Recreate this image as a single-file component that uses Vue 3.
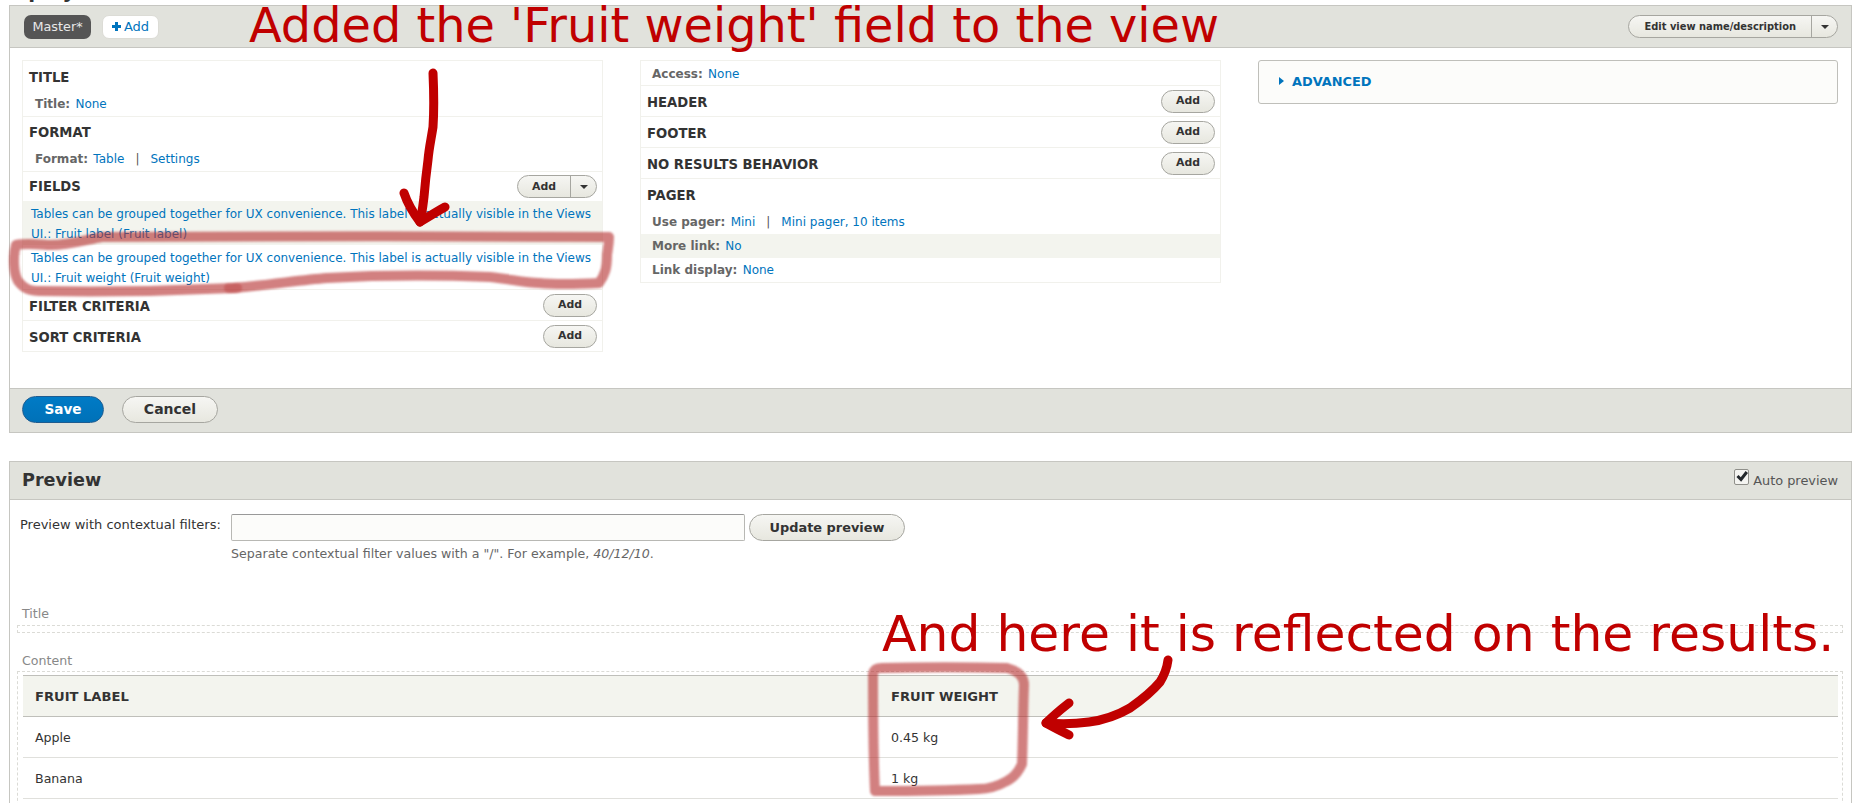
<template>
  <div class="page">
    <div class="cut-title">Displays</div>

    <section class="panel edit-panel">
      <header class="panel-head display-head">
        <div class="tabs">
          <span class="tab-master">Master*</span>
          <span class="tab-add">
            <svg class="plus" viewBox="0 0 9 9" width="9" height="9"><path d="M3 0h3v3h3v3H6v3H3V6H0V3h3z" fill="#0074bd" /></svg>Add
          </span>
        </div>
        <div class="drop-btn edit-drop">
          <span class="drop-main">Edit view name/description</span>
          <span class="drop-caret"></span>
        </div>
      </header>

      <div class="columns">
        <div class="bucket-col">
          <div class="bucket">
            <div class="bucket-title">TITLE</div>
            <div class="opt"><b>Title:</b> <a>None</a></div>
          </div>
          <div class="bucket">
            <div class="bucket-title second">FORMAT</div>
            <div class="opt"><b>Format:</b> <a>Table</a><i class="sep">|</i><a>Settings</a></div>
          </div>
          <div class="bucket">
            <div class="bucket-head fields-head">
              <span class="bucket-name">FIELDS</span>
              <div class="drop-btn">
                <span class="drop-main small">Add</span>
                <span class="drop-caret"></span>
              </div>
            </div>
            <div class="field-row odd"><a>Tables can be grouped together for UX convenience. This label is actually visible in the Views UI.: Fruit label (Fruit label)</a></div>
            <div class="field-row"><a>Tables can be grouped together for UX convenience. This label is actually visible in the Views UI.: Fruit weight (Fruit weight)</a></div>
          </div>
          <div class="bucket bucket-head" v-for="name in ['FILTER CRITERIA', 'SORT CRITERIA']" :key="name">
            <span class="bucket-name">{{ name }}</span>
            <span class="btn-add">Add</span>
          </div>
        </div>

        <div class="bucket-col">
          <div class="bucket">
            <div class="opt access"><b>Access:</b> <a>None</a></div>
          </div>
          <div class="bucket bucket-head" v-for="name in ['HEADER', 'FOOTER', 'NO RESULTS BEHAVIOR']" :key="name">
            <span class="bucket-name">{{ name }}</span>
            <span class="btn-add">Add</span>
          </div>
          <div class="bucket">
            <div class="bucket-title pager-title">PAGER</div>
            <div class="opt pager-opt"><b>Use pager:</b> <a>Mini</a><i class="sep">|</i><a>Mini pager, 10 items</a></div>
            <div class="opt pager-opt odd"><b>More link:</b> <a>No</a></div>
            <div class="opt pager-opt"><b>Link display:</b> <a>None</a></div>
          </div>
        </div>

        <div class="advanced">
          <span class="tri"></span>
          <a class="advanced-link">ADVANCED</a>
        </div>
      </div>

      <footer class="actions">
        <span class="btn btn-save">Save</span>
        <span class="btn btn-cancel">Cancel</span>
      </footer>
    </section>

    <section class="panel preview-panel">
      <header class="panel-head preview-head">
        <h2>Preview</h2>
        <label class="auto">
          <span class="check">
            <svg viewBox="0 0 16 16" width="16" height="16"><path d="M3.5 8 7 11.5 12.8 4" fill="none" stroke="#23282c" stroke-width="3" /></svg>
          </span>
          Auto preview
        </label>
      </header>

      <div class="filter-row">
        <span class="filter-label">Preview with contextual filters:</span>
        <div>
          <div class="filter-controls">
            <span class="text-input"></span>
            <span class="btn-update">Update preview</span>
          </div>
          <p class="hint">Separate contextual filter values with a "/". For example, <em>40/12/10</em>.</p>
        </div>
      </div>

      <div class="result-label title-label">Title</div>
      <div class="dashed title-box"></div>
      <div class="result-label content-label">Content</div>
      <div class="dashed content-box">
        <table>
          <thead>
            <tr><th class="first-col">FRUIT LABEL</th><th>FRUIT WEIGHT</th></tr>
          </thead>
          <tbody>
            <tr v-for="row in rows" :key="row.label">
              <td>{{ row.label }}</td><td>{{ row.weight }}</td>
            </tr>
          </tbody>
        </table>
      </div>
    </section>

    <!-- hand drawn notes on top of the screenshot -->
    <svg class="ink" width="1874" height="803" viewBox="0 0 1874 803">
      <g fill="none" stroke-linecap="round" stroke-linejoin="round">
        <g class="ink-soft" stroke="#b52d2d" stroke-width="10" opacity="0.6">
          <path d="M609 237C450 236 250 236 102 237C85 240 65 246 48 245C35 244 25 243 16 245C13 255 13 272 18 281C24 289 30 291 40 291C100 292 170 291 233 288C270 285 300 280 327 278C380 275 440 275 490 277C510 279 525 283 539 283C560 285 580 284 599 283C605 275 607 268 607 255C608 248 609 244 609 237" />
          <path d="M875 791C873 750 873 710 873 674C874 669 877 668 881 668C920 667 970 667 1007 668C1018 671 1024 676 1024 685C1023 710 1023 740 1022 764C1018 773 1013 778 1007 781C998 786 990 789 979 789C940 791 905 791 875 791" />
        </g>
        <path class="ink-soft" d="M229 288L237 288" stroke="#b52d2d" stroke-width="10" opacity="0.35" />
        <g class="ink-hard" stroke="#c00000" stroke-width="9">
          <path d="M433 73C434 95 434 112 433 127C431 140 429 148 428 160C426 175 425 185 424 197C423 205 422 214 420 222" />
          <path d="M404 193C408 205 414 214 420 222C428 217 436 212 445 207" />
          <path d="M1168 660C1167 668 1165 674 1160 682C1150 694 1140 701 1130 708C1118 715 1104 720 1089 722C1074 724 1060 724 1046 723" />
          <path d="M1069 703C1060 710 1052 717 1046 723C1053 727 1061 731 1069 735" />
        </g>
      </g>
    </svg>
    <div class="note note-top">Added the 'Fruit weight' field to the view</div>
    <div class="note note-bottom">And here it is reflected on the results.</div>
  </div>
</template>

<script setup>
const rows = [
  { label: "Apple", weight: "0.45 kg" },
  { label: "Banana", weight: "1 kg" },
];
</script>

<style>
html, body {
  margin: 0;
  background: #fff;
  overflow: hidden;
}
</style>

<style scoped>
.page {
  position: relative;
  width: 1874px;
  height: 803px;
  overflow: hidden;
  font-family: "DejaVu Sans", sans-serif;
  font-size: 12px;
  color: #333;
  box-sizing: border-box;
  padding: 5px 22px 0 9px;
  background: #fff;
}
a { color: #0074bd; }
b { font-weight: 700; color: #666; }
.cut-title {
  position: absolute;
  left: -7px;
  top: -21px;
  font-size: 20px;
  line-height: 24px;
  font-weight: 700;
  color: #333;
}
.panel {
  border: 1px solid #c6c6c1;
  box-sizing: border-box;
}
.panel-head {
  display: flex;
  align-items: center;
  justify-content: space-between;
  background: #e1e2dc;
  border-bottom: 1px solid #c6c6c1;
  box-sizing: border-box;
}
.display-head {
  height: 42px;
  padding: 0 13px 0 14px;
}
.tabs {
  display: flex;
  gap: 11px;
}
.tab-master {
  width: 67px;
  height: 24px;
  line-height: 24px;
  text-align: center;
  border-radius: 7px;
  background: #555;
  color: #e8e8e8;
  font-size: 12.8px;
}
.tab-add {
  display: flex;
  align-items: center;
  justify-content: center;
  gap: 3px;
  width: 57px;
  height: 24px;
  box-sizing: border-box;
  border-radius: 7px;
  border: 1px solid #dcdcd6;
  background: #fff;
  color: #0074bd;
  font-size: 13px;
}
.drop-btn {
  display: flex;
  height: 23px;
  border: 1px solid #a6a6a0;
  border-radius: 12px;
  box-sizing: border-box;
  background: linear-gradient(#f6f6f3, #e7e7df);
  overflow: hidden;
}
.drop-main {
  display: flex;
  align-items: center;
  padding: 0 14px;
  font-size: 10.9px;
  font-weight: 700;
  border-right: 1px solid #a6a6a0;
  color: #333;
}
.drop-caret {
  position: relative;
  width: 25px;
}
.drop-caret::after {
  content: "";
  position: absolute;
  left: 9px;
  top: 9px;
  border: 4px solid transparent;
  border-top: 4px solid #333;
  border-bottom: 0;
}
.edit-drop .drop-main {
  padding: 0 15px 0 16px;
  font-size: 9.9px;
}
.columns {
  display: grid;
  grid-template-columns: 581px 581px 580px;
  column-gap: 37px;
  align-items: start;
  height: 340px;
  padding: 12px 14px 0 12px;
  box-sizing: border-box;
}
.bucket-col {
  border: 1px solid #f1f1ec;
  box-sizing: border-box;
}
.bucket + .bucket {
  border-top: 1px solid #f1f1ec;
}
.bucket-title {
  font-size: 13.2px;
  font-weight: 700;
  color: #333;
  padding: 9px 6px 0;
  height: 30px;
  box-sizing: border-box;
}
.bucket-title.second {
  height: 29px;
  padding-top: 8px;
}
.bucket-name {
  font-size: 13.2px;
  font-weight: 700;
  color: #333;
  margin-top: 2px;
}
.bucket-head {
  display: flex;
  align-items: center;
  justify-content: space-between;
  height: 31px;
  padding: 0 5px 0 6px;
  box-sizing: border-box;
}
.fields-head {
  height: 29px;
}
.fields-head .bucket-name {
  margin-top: 0;
}
.opt {
  height: 25px;
  line-height: 26px;
  padding-left: 12px;
  box-sizing: border-box;
  color: #666;
}
.opt b { margin-right: 1.5px; }
.access {
  height: 24px;
  line-height: 26px;
  padding-left: 11px;
}
.pager-opt {
  height: 24px;
  line-height: 25px;
  padding-left: 11px;
}
.pager-title {
  height: 31px;
}
.odd {
  background: #f3f4ee;
}
.sep {
  font-style: normal;
  margin: 0 11px;
  color: #555;
}
.field-row {
  height: 44px;
  padding: 3px 7px 0 8px;
  line-height: 20px;
  box-sizing: border-box;
}
.btn-add {
  width: 54px;
  height: 23px;
  line-height: 20px;
  text-align: center;
  box-sizing: border-box;
  border: 1px solid #a6a6a0;
  border-radius: 12px;
  background: linear-gradient(#f6f6f3, #e7e7df);
  font-size: 10.9px;
  font-weight: 700;
  color: #333;
}
.advanced {
  display: flex;
  align-items: center;
  height: 44px;
  padding: 0 0 2px 20px;
  box-sizing: border-box;
  background: #fcfcfa;
  border: 1px solid #bfbfba;
  border-radius: 3px;
}
.tri {
  border: 4px solid transparent;
  border-left: 5px solid #0074bd;
  border-right: 0;
  margin-right: 8px;
}
.advanced-link {
  font-size: 12.9px;
  font-weight: 700;
}
.actions {
  display: flex;
  align-items: center;
  gap: 18px;
  height: 44px;
  padding: 0 0 2px 12px;
  background: #e1e2dc;
  border-top: 1px solid #c6c6c1;
  box-sizing: border-box;
}
.btn {
  height: 27px;
  line-height: 25px;
  text-align: center;
  box-sizing: border-box;
  border-radius: 14px;
  font-weight: 700;
}
.btn-save {
  width: 82px;
  font-size: 13.6px;
  color: #fff;
  background: linear-gradient(#007bc6, #0071b8);
  border: 1px solid #1e5c90;
}
.btn-cancel {
  width: 96px;
  font-size: 14px;
  color: #333;
  background: linear-gradient(#f6f6f3, #e7e7df);
  border: 1px solid #a6a6a0;
}
.preview-panel {
  margin-top: 28px;
  height: 360px;
}
.preview-head {
  height: 38px;
  padding: 0 13px 1px 12px;
}
h2 {
  margin: 0;
  font-size: 17.6px;
  font-weight: 700;
  color: #333;
}
.auto {
  display: flex;
  align-items: center;
  gap: 4px;
  color: #555;
  font-size: 12.9px;
}
.check {
  width: 15px;
  height: 16px;
  border: 1px solid #8f8f8a;
  border-radius: 2px;
  background: #f4f4f1;
  margin-top: -6px;
  box-sizing: border-box;
  display: block;
}
.check svg {
  display: block;
  margin: -2px 0 0 -1px;
}
.filter-row {
  display: flex;
  padding: 14px 0 0 10px;
  height: 79px;
  box-sizing: border-box;
}
.filter-label {
  width: 211px;
  flex: none;
  padding-top: 3px;
  font-size: 13px;
  color: #333;
}
.filter-controls {
  display: flex;
  gap: 4px;
}
.text-input {
  width: 514px;
  height: 27px;
  box-sizing: border-box;
  border: 1px solid #b8b8b4;
  border-top-color: #999;
  border-radius: 2px;
  background: #fcfcfa;
}
.btn-update {
  width: 156px;
  height: 27px;
  line-height: 25px;
  text-align: center;
  box-sizing: border-box;
  border: 1px solid #a6a6a0;
  border-radius: 14px;
  background: linear-gradient(#f6f6f3, #e7e7df);
  font-size: 12.9px;
  font-weight: 700;
  color: #333;
}
.hint {
  margin: 5px 0 0;
  font-size: 12.6px;
  color: #666;
}
.result-label {
  padding-left: 12px;
  font-size: 12.6px;
  color: #888;
}
.title-label {
  margin-top: 27px;
  height: 16px;
}
.dashed {
  margin: 0 8px 0 7px;
  border: 1px dashed #dbdbd6;
  box-sizing: border-box;
}
.title-box {
  height: 8px;
  margin-top: 3px;
}
.content-label {
  margin-top: 20px;
  height: 18px;
}
.content-box {
  height: 140px;
  padding: 3px 4px 0 5px;
}
table {
  width: 100%;
  border-collapse: collapse;
  font-size: 12.6px;
}
th {
  height: 41px;
  padding: 0 12px;
  text-align: left;
  font-weight: 700;
  font-size: 13.1px;
  color: #333;
  background: #f3f4ee;
  border-top: 1px solid #bfbfba;
  border-bottom: 1px solid #bfbfba;
  box-sizing: border-box;
}
.first-col {
  width: 856px;
}
td {
  height: 41px;
  padding: 0 12px;
  color: #333;
  border-bottom: 1px solid #e0e0dc;
  box-sizing: border-box;
}
.ink {
  position: absolute;
  left: 0;
  top: 0;
  pointer-events: none;
}
.ink-soft {
  filter: blur(0.9px);
}
.ink-hard {
  filter: blur(0.4px);
}
.note {
  position: absolute;
  white-space: nowrap;
  color: #c00000;
}
.note-top {
  left: 249px;
  top: 1px;
  font-size: 47.8px;
  line-height: 50px;
}
.note-bottom {
  left: 882px;
  top: 604px;
  font-size: 50.4px;
  line-height: 60px;
}
</style>
